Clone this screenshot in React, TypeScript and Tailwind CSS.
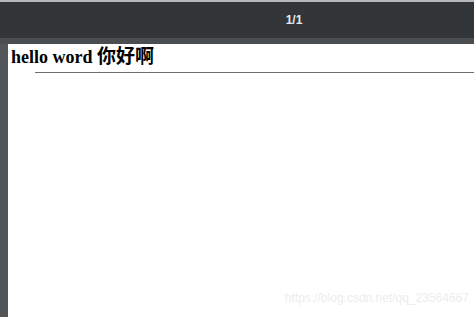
export default function App() {
  return (
    <div className="flex h-[317px] w-[474px] flex-col overflow-hidden bg-[#525659]">
      <div className="h-[2px] bg-[#b5b7b9]" />
      <div className="flex h-[36px] items-center justify-center bg-[#323639] pl-[114px]">
        <span className="font-['Liberation_Sans',sans-serif] text-[12px] font-semibold text-[#e8e8e8]">1/1</span>
      </div>
      <div className="h-[6px] bg-[#4a4e51]" />
      <div className="flex flex-1 pl-[8px]">
        <div className="relative flex-1 bg-white pt-[2px]">
          <h1 className="pl-[3px] font-['Liberation_Serif','Noto_Sans_CJK_SC',serif] text-[18px] leading-[22px] font-bold text-black">
            hello word <span className="text-[19px]">你好啊</span>
          </h1>
          <hr className="mt-[4px] ml-[27px] border-t border-[#707070]" />
          <span className="absolute right-[5px] bottom-[10px] font-['Liberation_Sans',sans-serif] text-[12px] text-[#ededed]">
            https://blog.csdn.net/qq_23564667
          </span>
        </div>
      </div>
    </div>
  );
}
